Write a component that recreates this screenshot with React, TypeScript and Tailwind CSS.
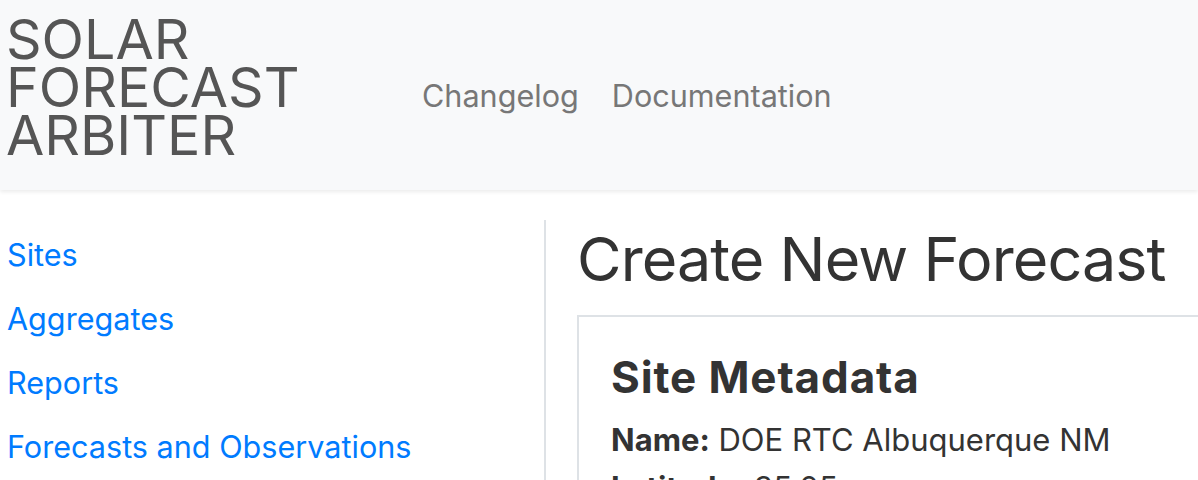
import React from 'react';

const sideLinks = ['Sites', 'Aggregates', 'Reports', 'Forecasts and Observations'];

export default function App() {
  return (
    <div className="h-[480px] bg-white font-['Inter',sans-serif] overflow-hidden">
      {/* Header */}
      <header className="h-[190px] bg-[#f8f9fa] shadow-[0_2px_4px_rgba(0,0,0,0.08)] flex items-center">
        <div className="pl-[6px] w-[422px] shrink-0 text-[55.5px] leading-[48px] text-[#555] -mt-[16px]">
          SOLAR<br />FORECAST<br />ARBITER
        </div>
        <nav className="flex gap-[33px] text-[30.6px] text-[#777] pt-[2px]">
          <a>Changelog</a>
          <a>Documentation</a>
        </nav>
      </header>

      <div className="flex pt-[30px]">
        {/* Sidebar */}
        <aside className="w-[546px] shrink-0 border-r-2 border-[#dee2e6] pl-[7px] pt-[3px] flex flex-col">
          {sideLinks.map((l) => (
            <a key={l} className="text-[30.6px] leading-[64px] text-[#007bff] h-[64px]">
              {l}
            </a>
          ))}
        </aside>

        {/* Content */}
        <main className="pl-[31px] flex-1 min-w-0">
          <h1 className="text-[61px] tracking-[-0.015em] leading-[80px] text-[#333] -mt-[1px]">Create New Forecast</h1>
          <div className="mt-[16px] border-2 border-[#dee2e6] border-r-0 pl-[32px] pt-[36px] w-[700px]">
            <h2 className="text-[44px] tracking-[0.02em] font-bold leading-[48px] text-[#333]">Site Metadata</h2>
            <p className="mt-[15px] text-[31px] text-[#333] leading-[48px]">
              <b>Name:</b> DOE RTC Albuquerque NM
            </p>
            <p className="text-[31px] text-[#333] leading-[48px]">
              <b>Latitude:</b> 35.05
            </p>
          </div>
        </main>
      </div>
    </div>
  );
}
